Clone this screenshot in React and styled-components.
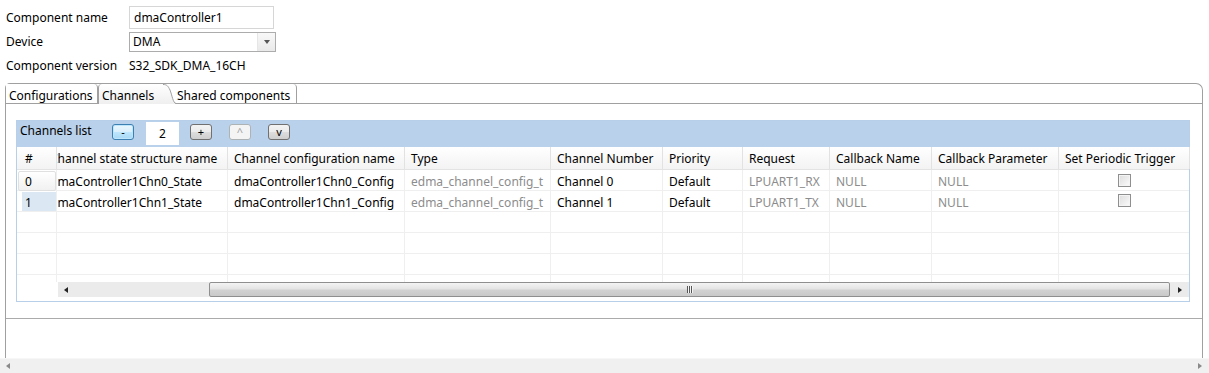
import React from "react";
import styled, { createGlobalStyle, css } from "styled-components";

const GlobalStyle = createGlobalStyle`
  html, body { margin: 0; padding: 0; background: #fff; overflow: hidden; }
  body {
    font-family: "Noto Sans", "Open Sans", sans-serif;
    font-size: 12px;
    color: #000;
  }
  * { box-sizing: border-box; }
`;

const Page = styled.div`
  width: 1209px;
  height: 373px;
  display: flex;
  flex-direction: column;
`;

/* ---------- form ---------- */
const Form = styled.div`
  display: grid;
  grid-template-columns: 123px auto;
  row-gap: 3px;
  padding: 6px 0 0 6px;
  align-items: center;
  justify-items: start;
`;

const Label = styled.div`
  line-height: 20px;
  padding-top: ${(p) => p.$pt || 0}px;
`;

const TextBox = styled.div`
  width: 145px;
  height: 23px;
  border: 1px solid #d6d6d6;
  padding: 0 4px;
  line-height: 21px;
`;

const Select = styled.div`
  width: 147px;
  height: 20px;
  border: 1px solid #acacac;
  display: flex;
  align-items: stretch;
  background: #fff;
`;

const SelectText = styled.div`
  flex: 1;
  padding-left: 3px;
  line-height: 18px;
`;

const SelectButton = styled.div`
  width: 18px;
  border-left: 1px solid #e6e6e6;
  background: linear-gradient(#f8f8f8, #e9e9e9);
  display: flex;
  align-items: center;
  justify-content: center;
  &::after {
    content: "";
    border-left: 3.5px solid transparent;
    border-right: 3.5px solid transparent;
    border-top: 4px solid #555;
  }
`;

const Value = styled.div`
  line-height: 20px;
  padding-top: 1px;
`;

/* ---------- folder & tabs ---------- */
const Folder = styled.div`
  flex: 1;
  margin: 7px 6px 0 5px;
  border: 1px solid #a0a0a0;
  border-bottom: none;
  border-radius: 5px 7px 0 0;
  display: flex;
  flex-direction: column;
  min-height: 0;
`;

const TabStrip = styled.div`
  height: 20px;
  display: flex;
  align-items: stretch;
  border-bottom: 1px solid #a0a0a0;
`;

const Tab = styled.div`
  height: 19px;
  padding-top: 2px;
  line-height: 19px;
  padding-left: ${(p) => p.$pad}px;
  width: ${(p) => p.$w}px;
  white-space: nowrap;
  background: #fff;
  ${(p) => p.$lb && css`border-left: 1px solid #a0a0a0; border-top-left-radius: 4px;`}
  ${(p) => p.$rb && css`border-right: 1px solid #a0a0a0; border-top-right-radius: 4px;`}
  ${(p) =>
    p.$selected &&
    css`
      height: 20px;
      margin-bottom: -1px;
      background: linear-gradient(#ffffff, #efefef);
    `}
`;

const TabCurve = styled.svg`
  display: block;
  flex: none;
  margin-bottom: -1px;
`;

const FolderBody = styled.div`
  padding: 16px 12px 16px 10px;
`;

const Divider = styled.div`
  border-top: 1px solid #ababab;
  flex: 1;
`;

/* ---------- channels group ---------- */
const Group = styled.div`
  border: 1px solid #b7cfe9;
  padding-bottom: 4px;
`;

const GroupBar = styled.div`
  height: 26px;
  background: #b9d1ea;
  display: flex;
  align-items: flex-start;
`;

const GroupTitle = styled.div`
  width: 95px;
  padding-left: 3px;
  margin-top: 1px;
  line-height: 18px;
`;

const SmallButton = styled.div`
  width: 22px;
  height: 16px;
  margin-top: 3px;
  margin-left: ${(p) => p.$ml || 0}px;
  border: 1px solid #707070;
  border-radius: 3px;
  background: linear-gradient(#f3f3f3 0%, #ebebeb 50%, #dddddd 51%, #cfcfcf 100%);
  font-size: 11px;
  line-height: 14px;
  text-align: center;
  color: #000;
  ${(p) =>
    p.$focus &&
    css`
      border-color: #3c7fb1;
      background: linear-gradient(#eaf6fd 0%, #d9f0fc 50%, #bee6fd 51%, #a7d9f5 100%);
      box-shadow: inset 0 0 0 1px #bde6fd;
    `}
  ${(p) =>
    p.$disabled &&
    css`
      border-color: #adb2b5;
      background: #f4f4f4;
      color: #a0a0a0;
    `}
`;

const Spin = styled.div`
  width: 33px;
  height: 23px;
  margin-top: 1px;
  margin-left: 12px;
  background: #fff;
  text-align: center;
  line-height: 23px;
`;

/* ---------- table ---------- */
const COLS = "40px 171px 177px 146px 112px 80px 87px 102px 127px 131px";

const HeadRow = styled.div`
  display: grid;
  grid-template-columns: ${COLS};
  height: 23px;
  background: linear-gradient(#ffffff, #f3f3f3);
  border-bottom: 1px solid #e3e3e3;
`;

const HeadCell = styled.div`
  border-right: 1px solid #e2e2e2;
  padding-left: ${(p) => (p.$pad !== undefined ? p.$pad : 6)}px;
  padding-top: 2px;
  text-indent: ${(p) => p.$indent || 0}px;
  line-height: 19px;
  white-space: nowrap;
  overflow: hidden;
`;

const Body = styled.div`
  height: 112px;
  overflow: hidden;
`;

const Row = styled.div`
  display: grid;
  grid-template-columns: ${COLS};
  height: 21px;
  border-bottom: 1px solid #efefef;
`;

const Cell = styled.div`
  border-right: 1px solid #efefef;
  padding-left: ${(p) => (p.$pad !== undefined ? p.$pad : 6)}px;
  padding-top: 3px;
  text-indent: ${(p) => p.$indent || 0}px;
  line-height: 17px;
  white-space: nowrap;
  overflow: hidden;
  color: ${(p) => (p.$muted ? "#8c8c8c" : "#000")};
  ${(p) =>
    p.$center &&
    css`
      display: flex;
      align-items: center;
      justify-content: center;
      padding: 0;
    `}
`;

const RowHead = styled.div`
  border-right: 1px solid #efefef;
  padding: 1px 0 0 1px;
  display: flex;
`;

const RowHeadInner = styled.div`
  flex: 1;
  margin-left: ${(p) => (p.$sel ? 4 : 0)}px;
  padding-left: ${(p) => (p.$sel ? 3 : 6)}px;
  padding-top: 2px;
  line-height: 17px;
  ${(p) =>
    p.$btn &&
    css`
      border: 1px solid #e0e0e0;
      border-radius: 2px;
      background: linear-gradient(#ffffff, #f1f1f1);
      padding-top: 1px;
    `}
  ${(p) =>
    p.$sel &&
    css`
      background: #dce7f4;
    `}
`;

const Check = styled.div`
  width: 13px;
  height: 13px;
  border: 1px solid #8e8f8f;
  background: linear-gradient(135deg, #dcdcdc, #fbfbfb);
  box-shadow: inset 0 0 0 1px #f4f4f4;
  margin-top: -1px;
`;

/* ---------- scrollbars ---------- */
const HScroll = styled.div`
  margin-left: 41px;
  height: 15px;
  background: #ebebeb;
  display: flex;
  align-items: stretch;
`;

const Arrow = styled.div`
  width: ${(p) => p.$w}px;
  flex: none;
  display: flex;
  align-items: center;
  justify-content: center;
  &::after {
    content: "";
    border-top: 3px solid transparent;
    border-bottom: 3px solid transparent;
    ${(p) =>
      p.$dir === "left"
        ? css`border-right: 4px solid ${p.$color || "#222"};`
        : css`border-left: 4px solid ${p.$color || "#222"};`}
  }
`;

const Spacer = styled.div`
  width: ${(p) => p.$w}px;
  flex: none;
`;

const Thumb = styled.div`
  flex: 1;
  border: 1px solid #8f8f8f;
  border-radius: 2px;
  background: linear-gradient(#f4f4f4 0%, #e4e4e4 45%, #d2d2d2 55%, #c9c9c9 100%);
  display: flex;
  align-items: center;
  justify-content: center;
  gap: 1px;
`;

const Grip = styled.span`
  width: 1px;
  height: 7px;
  background: #555;
  box-shadow: 1px 0 0 #f6f6f6;
`;

const PageScroll = styled.div`
  height: 15px;
  flex: none;
  background: #f0f0f0;
  border-top: 1px solid #f7f7f7;
  display: flex;
  justify-content: space-between;
  align-items: stretch;
`;

const header = [
  { t: "#", pad: 8 },
  { t: "Channel state structure name", pad: 0, indent: -7 },
  { t: "Channel configuration name" },
  { t: "Type" },
  { t: "Channel Number" },
  { t: "Priority" },
  { t: "Request" },
  { t: "Callback Name" },
  { t: "Callback Parameter" },
  { t: "Set Periodic Trigger" },
];

const rows = [
  {
    id: "0",
    state: "dmaController1Chn0_State",
    cfg: "dmaController1Chn0_Config",
    type: "edma_channel_config_t",
    num: "Channel 0",
    prio: "Default",
    req: "LPUART1_RX",
  },
  {
    id: "1",
    state: "dmaController1Chn1_State",
    cfg: "dmaController1Chn1_Config",
    type: "edma_channel_config_t",
    num: "Channel 1",
    prio: "Default",
    req: "LPUART1_TX",
  },
];

export default function App() {
  return (
    <>
      <GlobalStyle />
      <Page>
        <Form>
          <Label>Component name</Label>
          <TextBox>dmaController1</TextBox>
          <Label>Device</Label>
          <Select>
            <SelectText>DMA</SelectText>
            <SelectButton />
          </Select>
          <Label $pt={1}>Component version</Label>
          <Value>S32_SDK_DMA_16CH</Value>
        </Form>

        <Folder>
          <TabStrip>
            <Tab $w={92} $pad={3} $rb>
              Configurations
            </Tab>
            <Tab $w={65} $pad={3} $lb $selected>
              Channels
            </Tab>
            <TabCurve width="13" height="20" viewBox="0 0 13 20">
              <defs>
                <linearGradient id="tg" x1="0" y1="0" x2="0" y2="1">
                  <stop offset="0" stopColor="#ffffff" />
                  <stop offset="1" stopColor="#efefef" />
                </linearGradient>
              </defs>
              <path d="M0 0 C4 0 5 2 7 6 C9 11 10 19 13 20 L0 20 Z" fill="url(#tg)" />
              <path d="M0 0.5 C4 0.5 5 2 7 6 C9 11 10 19 13 19.5" fill="none" stroke="#a0a0a0" strokeWidth="1" />
            </TabCurve>
            <Tab $w={121} $pad={1} $rb>
              Shared components
            </Tab>
          </TabStrip>

          <FolderBody>
            <Group>
              <GroupBar>
                <GroupTitle>Channels list</GroupTitle>
                <SmallButton $focus>-</SmallButton>
                <Spin>2</Spin>
                <SmallButton $ml={11}>+</SmallButton>
                <SmallButton $ml={17} $disabled>^</SmallButton>
                <SmallButton $ml={17}>v</SmallButton>
              </GroupBar>

              <HeadRow>
                {header.map((h, i) => (
                  <HeadCell key={i} $pad={h.pad} $indent={h.indent}>
                    {h.t}
                  </HeadCell>
                ))}
              </HeadRow>

              <Body>
                {rows.map((r, i) => (
                  <Row key={r.id}>
                    <RowHead>
                      <RowHeadInner $btn={i === 0} $sel={i === 1}>
                        {r.id}
                      </RowHeadInner>
                    </RowHead>
                    <Cell $pad={0} $indent={-7}>{r.state}</Cell>
                    <Cell>{r.cfg}</Cell>
                    <Cell $muted>{r.type}</Cell>
                    <Cell>{r.num}</Cell>
                    <Cell>{r.prio}</Cell>
                    <Cell $muted>{r.req}</Cell>
                    <Cell $muted>NULL</Cell>
                    <Cell $muted>NULL</Cell>
                    <Cell $center>
                      <Check />
                    </Cell>
                  </Row>
                ))}
                {[0, 1, 2, 3].map((k) => (
                  <Row key={"e" + k}>
                    {header.map((_, j) => (
                      <Cell key={j} />
                    ))}
                  </Row>
                ))}
              </Body>

              <HScroll>
                <Arrow $w={15} $dir="left" />
                <Spacer $w={136} />
                <Thumb>
                  <Grip />
                  <Grip />
                  <Grip />
                </Thumb>
                <Arrow $w={19} $dir="right" />
              </HScroll>
            </Group>
          </FolderBody>
          <Divider />
        </Folder>

        <PageScroll>
          <Arrow $w={16} $dir="left" $color="#8a8a8a" />
          <Arrow $w={18} $dir="right" $color="#8a8a8a" />
        </PageScroll>
      </Page>
    </>
  );
}
